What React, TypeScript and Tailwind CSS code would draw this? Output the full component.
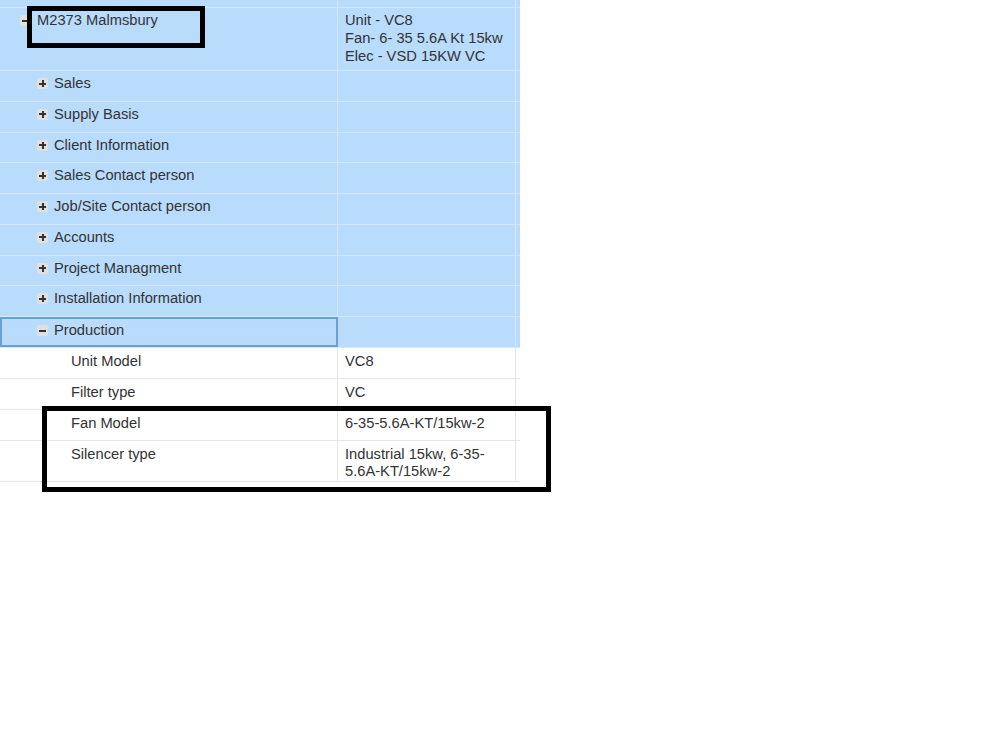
import type { ReactNode } from 'react';

type Expander = 'plus' | 'minus' | null;

type RowProps = {
    label?: ReactNode;
    value?: ReactNode;
    level?: 0 | 1 | 2;
    expander?: Expander;
    selected?: boolean;
    focused?: boolean;
    height: string;
    pad?: string;
};

const indent: Record<number, string> = {
    0: 'pl-[20px]',
    1: 'pl-[37px]',
    2: 'pl-[54px]',
};

function ExpandIcon({ type }: { type: Expander }) {
    if (!type) return <span className="w-[11px] h-[17px] shrink-0" />;
    return (
        <span className="h-[17px] flex items-center shrink-0">
            <span className="w-[11px] h-[11px] rounded-[2px] bg-[#e0e0e0] relative">
                <span className="absolute left-[2px] top-[4.5px] w-[7px] h-[2px] bg-[#333]" />
                {type === 'plus' && <span className="absolute left-[4.5px] top-[2px] w-[2px] h-[7px] bg-[#333]" />}
            </span>
        </span>
    );
}

function Row({ label, value, level = 1, expander = null, selected = true, focused = false, height, pad = 'pt-[4px]' }: RowProps) {
    const line = selected ? 'border-[#d3e8fd]' : 'border-[#e6e6e6]';
    return (
        <div className={`flex box-border border-b ${line} ${height} ${selected ? 'bg-[#b9dcfd]' : 'bg-white'}`}>
            <div
                className={`w-[338px] shrink-0 box-border border-r ${line} ${label !== undefined ? indent[level] : ''} ${pad} flex items-start gap-[6px] ${focused ? 'outline-2 outline-[#6c9fd9] -outline-offset-2' : ''}`}
            >
                {label !== undefined && (
                    <>
                        <ExpandIcon type={expander} />
                        <span className="leading-[17px] whitespace-nowrap">{label}</span>
                    </>
                )}
            </div>
            <div className={`w-[178px] shrink-0 box-border border-r ${line} pl-[7px] ${pad} leading-[17px] whitespace-nowrap`}>
                {value}
            </div>
            <div className="flex-1" />
        </div>
    );
}

export default function App() {
    const groups = [
        'Sales',
        'Supply Basis',
        'Client Information',
        'Sales Contact person',
        'Job/Site Contact person',
        'Accounts',
        'Project Managment',
        'Installation Information',
    ];

    return (
        <div className="relative min-h-screen bg-white text-[14.7px] text-[#333] font-['Liberation_Sans',Arial,sans-serif]">
            <div className="w-[520px]">
                <Row height="h-[8px]" />
                <Row
                    height="h-[63px]"
                    level={0}
                    expander="minus"
                    label="M2373 Malmsbury"
                    value={
                        <div className="leading-[18px] -mt-[1px]">
                            <div>Unit - VC8</div>
                            <div>Fan- 6- 35 5.6A Kt 15kw</div>
                            <div>Elec - VSD 15KW VC</div>
                        </div>
                    }
                />
                {groups.map((g) => (
                    <Row key={g} height="h-[30.75px]" level={1} expander="plus" label={g} />
                ))}
                <Row height="h-[31px]" pad="pt-[5px]" level={1} expander="minus" label="Production" focused />
                <Row height="h-[31px]" pad="pt-[5px]" level={2} selected={false} label="Unit Model" value="VC8" />
                <Row height="h-[31px]" pad="pt-[5px]" level={2} selected={false} label="Filter type" value="VC" />
                <Row height="h-[31px]" pad="pt-[5px]" level={2} selected={false} label="Fan Model" value="6-35-5.6A-KT/15kw-2" />
                <Row
                    height="h-[41px]"
                    pad="pt-[5px]"
                    level={2}
                    selected={false}
                    label="Silencer type"
                    value={
                        <>
                            Industrial 15kw, 6-35-
                            <br />
                            5.6A-KT/15kw-2
                        </>
                    }
                />
            </div>

            {/* annotation boxes drawn over the grid */}
            <div className="absolute left-[27px] top-[6px] w-[178px] h-[42px] border-[5px] border-black" />
            <div className="absolute left-[42px] top-[406px] w-[509px] h-[86px] border-[5px] border-black" />
        </div>
    );
}
